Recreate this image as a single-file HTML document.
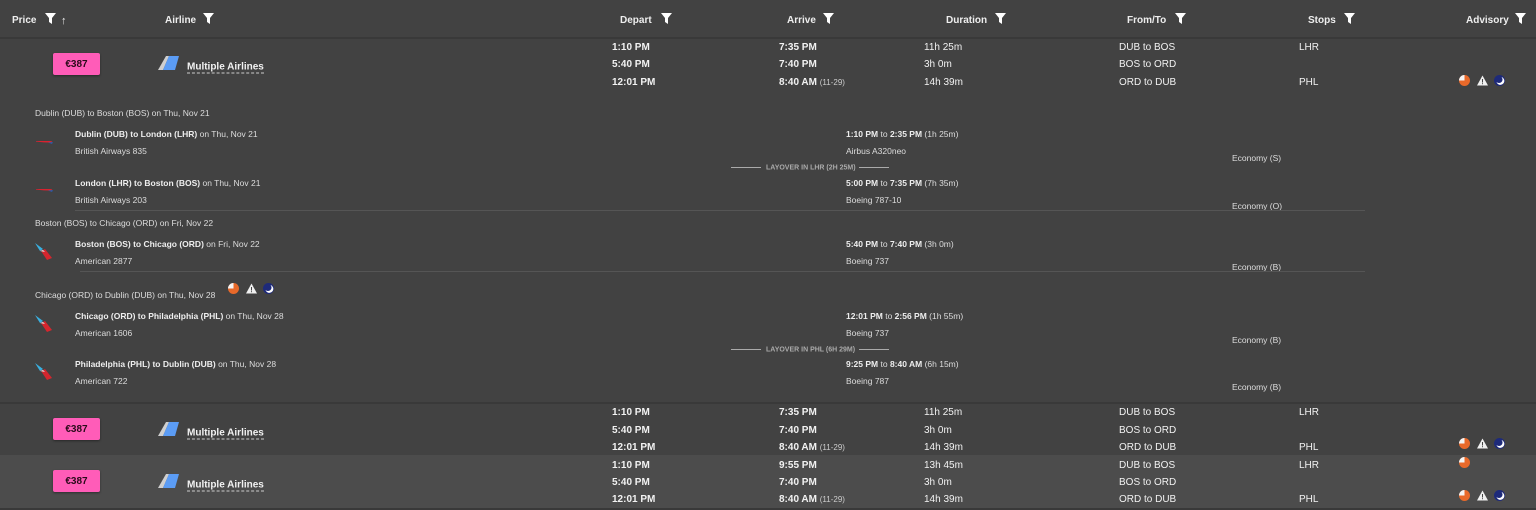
<!DOCTYPE html>
<html><head><meta charset="utf-8"><style>
html,body{margin:0;padding:0;}
body{width:1536px;height:510px;background:#424242;position:relative;overflow:hidden;font-family:"Liberation Sans",Arial,sans-serif;color:#e6e6e6;}
.a{position:absolute;white-space:nowrap;line-height:12px;transform:translateY(-50%);margin-top:1.5px;}
.h{font-size:10px;font-weight:bold;color:#eee;}
.m{font-size:10px;font-weight:bold;color:#f2f2f2;}
.m small{font-size:8px;font-weight:normal;color:#ccc;}
.d{font-size:8.5px;color:#ddd;margin-top:0.5px;}
.d b{color:#eee;}
.hr{position:absolute;height:1px;background:#555;}
.div{position:absolute;left:0;width:1536px;height:2px;background:#393939;}
.btn{position:absolute;left:53px;width:47px;height:22px;background:#ff5cb8;border-radius:2px;box-shadow:0 1px 2px rgba(0,0,0,.4);color:#2a0a1a;font-size:10px;font-weight:bold;text-align:center;line-height:23px;}
.ml{font-size:10px;font-weight:bold;color:#f2f2f2;border-bottom:1px dashed #ccc;line-height:11px;}
.ic{position:absolute;}
.lay{position:absolute;font-size:7px;font-weight:bold;color:#aaa;transform:translateY(-50%);white-space:nowrap;margin-top:1px;}
</style></head><body>
<svg width="0" height="0" style="position:absolute"><defs>
<g id="f"><path d="M0 0H11L7 5V11L4 9V5Z" fill="#fff"/></g>
<g id="tail"><path d="M2 14L10 0H13L7 14Z" fill="#cfcfcf"/><path d="M7 14L13 0H23L19 14Z" fill="#5b9cf5"/></g>
<g id="aa"><path d="M0 0L8 6L5 8Z" fill="#3ab0e0"/><path d="M6 8L10 6L17 15L12 17Z" fill="#d5262e"/><path d="M5 8L8 7L10 9Z" fill="#ddd"/></g>
<g id="ba"><path d="M0 0Q8 -1 16 1Q8 1 0 0Z" fill="#d8222f" stroke="#d8222f" stroke-width="1.2"/><path d="M12 1.5L17 1L16 3Z" fill="#2a5aa8"/></g>
<g id="adv"><circle cx="5.5" cy="5.5" r="5.5" fill="#e8692a"/><path d="M5.5 5.5V0A5.5 5.5 0 0 0 0 5.5Z" fill="#f4f4f4"/><path d="M23.5 0.5L29 10.5H18Z" fill="#f0f0f0"/><rect x="23" y="4" width="1" height="3.5" fill="#424242"/><rect x="23" y="8.2" width="1" height="1" fill="#424242"/><circle cx="40.5" cy="5.5" r="5.5" fill="#1e2a7a"/><path d="M42.5 2A4 4 0 1 1 37.5 7A3 3 0 0 0 42.5 2Z" fill="#fff"/></g>
</defs></svg>

<!-- header -->
<div class="a h" style="left:12px;top:19px">Price</div>
<svg class="ic" style="left:45px;top:13px" width="12" height="12"><use href="#f"/></svg>
<div class="a h" style="left:61px;top:19px;font-size:11px">↑</div>
<div class="a h" style="left:165px;top:19px">Airline</div>
<svg class="ic" style="left:203px;top:13px" width="12" height="12"><use href="#f"/></svg>
<div class="a h" style="left:620px;top:19px">Depart</div>
<svg class="ic" style="left:661px;top:13px" width="12" height="12"><use href="#f"/></svg>
<div class="a h" style="left:787px;top:19px">Arrive</div>
<svg class="ic" style="left:823px;top:13px" width="12" height="12"><use href="#f"/></svg>
<div class="a h" style="left:946px;top:19px">Duration</div>
<svg class="ic" style="left:995px;top:13px" width="12" height="12"><use href="#f"/></svg>
<div class="a h" style="left:1127px;top:19px">From/To</div>
<svg class="ic" style="left:1175px;top:13px" width="12" height="12"><use href="#f"/></svg>
<div class="a h" style="left:1308px;top:19px">Stops</div>
<svg class="ic" style="left:1344px;top:13px" width="12" height="12"><use href="#f"/></svg>
<div class="a h" style="left:1466px;top:19px">Advisory</div>
<svg class="ic" style="left:1515px;top:13px" width="12" height="12"><use href="#f"/></svg>
<div class="div" style="top:37px"></div>

<!-- row 1 -->
<div class="btn" style="top:53px">€387</div>
<svg class="ic" style="left:156px;top:56px" width="24" height="15"><use href="#tail"/></svg>
<div class="a" style="left:187px;top:64px"><span class="ml">Multiple Airlines</span></div>
<div class="a m" style="left:612px;top:46px">1:10 PM</div>
<div class="a m" style="left:612px;top:63px">5:40 PM</div>
<div class="a m" style="left:612px;top:81px">12:01 PM</div>
<div class="a m" style="left:779px;top:46px">7:35 PM</div>
<div class="a m" style="left:779px;top:63px">7:40 PM</div>
<div class="a m" style="left:779px;top:81px">8:40 AM <small>(11-29)</small></div>
<div class="a m" style="left:924px;top:46px;font-weight:normal">11h 25m</div>
<div class="a m" style="left:924px;top:63px;font-weight:normal">3h 0m</div>
<div class="a m" style="left:924px;top:81px;font-weight:normal">14h 39m</div>
<div class="a m" style="left:1119px;top:46px;font-weight:normal">DUB to BOS</div>
<div class="a m" style="left:1119px;top:63px;font-weight:normal">BOS to ORD</div>
<div class="a m" style="left:1119px;top:81px;font-weight:normal">ORD to DUB</div>
<div class="a m" style="left:1299px;top:46px;font-weight:normal">LHR</div>
<div class="a m" style="left:1299px;top:81px;font-weight:normal">PHL</div>
<svg class="ic" style="left:1459px;top:75px" width="48" height="12"><use href="#adv"/></svg>

<!-- details -->
<div class="a d" style="left:35px;top:112px">Dublin (DUB) to Boston (BOS) on Thu, Nov 21</div>
<svg class="ic" style="left:36px;top:141px" width="18" height="5"><use href="#ba"/></svg>
<div class="a d" style="left:75px;top:133px"><b>Dublin (DUB) to London (LHR)</b> on Thu, Nov 21</div>
<div class="a d" style="left:75px;top:150px">British Airways 835</div>
<div class="a d" style="left:846px;top:133px"><b>1:10 PM</b> to <b>2:35 PM</b> (1h 25m)</div>
<div class="a d" style="left:846px;top:150px">Airbus A320neo</div>
<div class="hr" style="left:731px;top:167px;width:30px;background:#aaa"></div>
<div class="lay" style="left:766px;top:167px">LAYOVER IN LHR (2H 25M)</div>
<div class="hr" style="left:859px;top:167px;width:30px;background:#aaa"></div>
<div class="a d" style="left:1232px;top:157px">Economy (S)</div>
<svg class="ic" style="left:36px;top:189px" width="18" height="5"><use href="#ba"/></svg>
<div class="a d" style="left:75px;top:182px"><b>London (LHR) to Boston (BOS)</b> on Thu, Nov 21</div>
<div class="a d" style="left:75px;top:199px">British Airways 203</div>
<div class="a d" style="left:846px;top:182px"><b>5:00 PM</b> to <b>7:35 PM</b> (7h 35m)</div>
<div class="a d" style="left:846px;top:199px">Boeing 787-10</div>
<div class="a d" style="left:1232px;top:205px">Economy (O)</div>
<div class="hr" style="left:75px;top:210px;width:1290px"></div>

<div class="a d" style="left:35px;top:222px">Boston (BOS) to Chicago (ORD) on Fri, Nov 22</div>
<svg class="ic" style="left:35px;top:243px" width="18" height="18"><use href="#aa"/></svg>
<div class="a d" style="left:75px;top:243px"><b>Boston (BOS) to Chicago (ORD)</b> on Fri, Nov 22</div>
<div class="a d" style="left:75px;top:260px">American 2877</div>
<div class="a d" style="left:846px;top:243px"><b>5:40 PM</b> to <b>7:40 PM</b> (3h 0m)</div>
<div class="a d" style="left:846px;top:260px">Boeing 737</div>
<div class="a d" style="left:1232px;top:266px">Economy (B)</div>
<div class="hr" style="left:80px;top:271px;width:1285px"></div>

<div class="a d" style="left:35px;top:294px">Chicago (ORD) to Dublin (DUB) on Thu, Nov 28</div>
<svg class="ic" style="left:228px;top:283px" width="48" height="12"><use href="#adv"/></svg>
<svg class="ic" style="left:35px;top:315px" width="18" height="18"><use href="#aa"/></svg>
<div class="a d" style="left:75px;top:315px"><b>Chicago (ORD) to Philadelphia (PHL)</b> on Thu, Nov 28</div>
<div class="a d" style="left:75px;top:332px">American 1606</div>
<div class="a d" style="left:846px;top:315px"><b>12:01 PM</b> to <b>2:56 PM</b> (1h 55m)</div>
<div class="a d" style="left:846px;top:332px">Boeing 737</div>
<div class="hr" style="left:731px;top:349px;width:30px;background:#aaa"></div>
<div class="lay" style="left:766px;top:349px">LAYOVER IN PHL (6H 29M)</div>
<div class="hr" style="left:859px;top:349px;width:30px;background:#aaa"></div>
<div class="a d" style="left:1232px;top:339px">Economy (B)</div>
<svg class="ic" style="left:35px;top:363px" width="18" height="18"><use href="#aa"/></svg>
<div class="a d" style="left:75px;top:363px"><b>Philadelphia (PHL) to Dublin (DUB)</b> on Thu, Nov 28</div>
<div class="a d" style="left:75px;top:380px">American 722</div>
<div class="a d" style="left:846px;top:363px"><b>9:25 PM</b> to <b>8:40 AM</b> (6h 15m)</div>
<div class="a d" style="left:846px;top:380px">Boeing 787</div>
<div class="a d" style="left:1232px;top:386px">Economy (B)</div>

<div class="div" style="top:402px"></div>
<!-- row 2 -->
<div class="btn" style="top:418px">€387</div>
<svg class="ic" style="left:156px;top:422px" width="24" height="15"><use href="#tail"/></svg>
<div class="a" style="left:187px;top:430px"><span class="ml">Multiple Airlines</span></div>
<div class="a m" style="left:612px;top:411px">1:10 PM</div>
<div class="a m" style="left:612px;top:429px">5:40 PM</div>
<div class="a m" style="left:612px;top:446px">12:01 PM</div>
<div class="a m" style="left:779px;top:411px">7:35 PM</div>
<div class="a m" style="left:779px;top:429px">7:40 PM</div>
<div class="a m" style="left:779px;top:446px">8:40 AM <small>(11-29)</small></div>
<div class="a m" style="left:924px;top:411px;font-weight:normal">11h 25m</div>
<div class="a m" style="left:924px;top:429px;font-weight:normal">3h 0m</div>
<div class="a m" style="left:924px;top:446px;font-weight:normal">14h 39m</div>
<div class="a m" style="left:1119px;top:411px;font-weight:normal">DUB to BOS</div>
<div class="a m" style="left:1119px;top:429px;font-weight:normal">BOS to ORD</div>
<div class="a m" style="left:1119px;top:446px;font-weight:normal">ORD to DUB</div>
<div class="a m" style="left:1299px;top:411px;font-weight:normal">LHR</div>
<div class="a m" style="left:1299px;top:446px;font-weight:normal">PHL</div>
<svg class="ic" style="left:1459px;top:438px" width="48" height="12"><use href="#adv"/></svg>

<!-- row 3 -->
<div style="position:absolute;left:0;top:455px;width:1536px;height:53px;background:#4c4c4c"></div>
<div class="div" style="top:508px"></div>
<div class="btn" style="top:470px">€387</div>
<svg class="ic" style="left:156px;top:474px" width="24" height="15"><use href="#tail"/></svg>
<div class="a" style="left:187px;top:482px"><span class="ml">Multiple Airlines</span></div>
<div class="a m" style="left:612px;top:464px">1:10 PM</div>
<div class="a m" style="left:612px;top:481px">5:40 PM</div>
<div class="a m" style="left:612px;top:498px">12:01 PM</div>
<div class="a m" style="left:779px;top:464px">9:55 PM</div>
<div class="a m" style="left:779px;top:481px">7:40 PM</div>
<div class="a m" style="left:779px;top:498px">8:40 AM <small>(11-29)</small></div>
<div class="a m" style="left:924px;top:464px;font-weight:normal">13h 45m</div>
<div class="a m" style="left:924px;top:481px;font-weight:normal">3h 0m</div>
<div class="a m" style="left:924px;top:498px;font-weight:normal">14h 39m</div>
<div class="a m" style="left:1119px;top:464px;font-weight:normal">DUB to BOS</div>
<div class="a m" style="left:1119px;top:481px;font-weight:normal">BOS to ORD</div>
<div class="a m" style="left:1119px;top:498px;font-weight:normal">ORD to DUB</div>
<div class="a m" style="left:1299px;top:464px;font-weight:normal">LHR</div>
<div class="a m" style="left:1299px;top:498px;font-weight:normal">PHL</div>
<svg class="ic" style="left:1459px;top:457px" width="12" height="12"><circle cx="5.5" cy="5.5" r="5.5" fill="#e8692a"/><path d="M5.5 5.5V0A5.5 5.5 0 0 0 0 5.5Z" fill="#f4f4f4"/></svg>
<svg class="ic" style="left:1459px;top:490px" width="48" height="12"><use href="#adv"/></svg>
</body></html>
